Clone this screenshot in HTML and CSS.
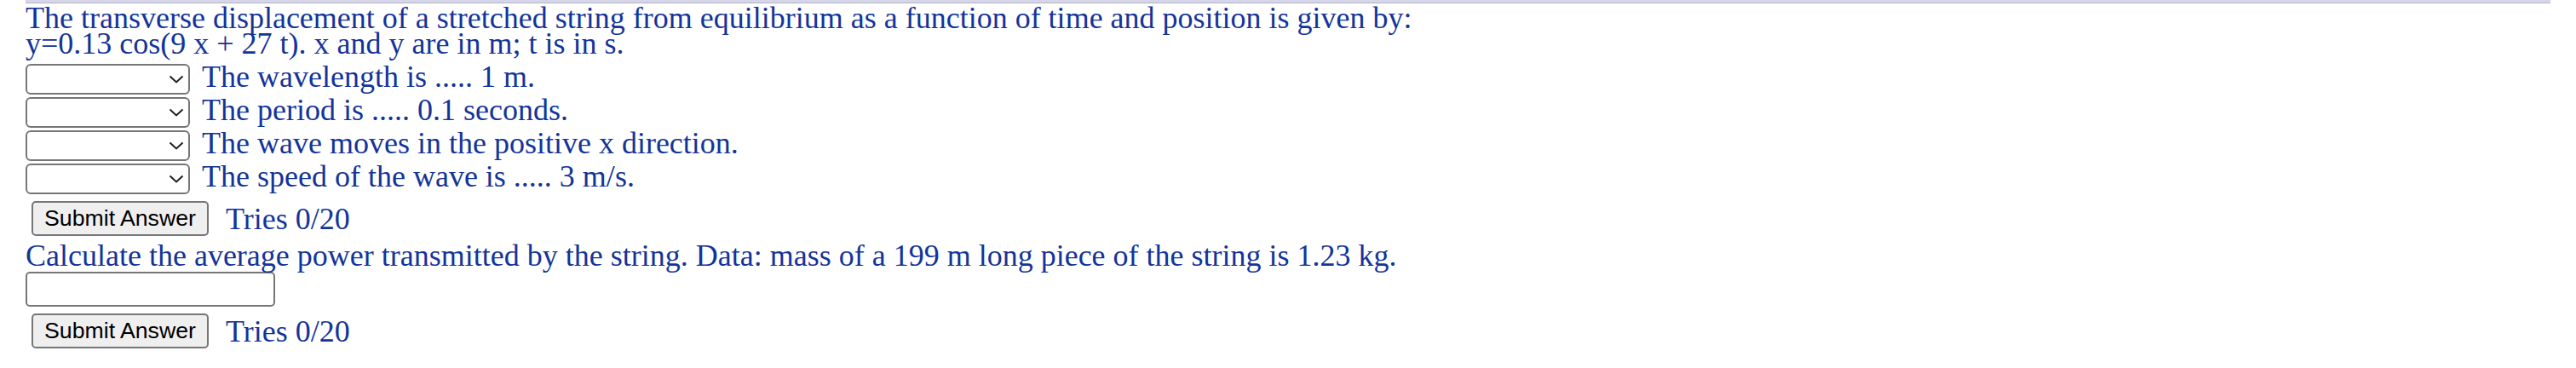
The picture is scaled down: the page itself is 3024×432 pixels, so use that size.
FILE: index.html
```html
<!DOCTYPE html>
<html>
<head>
<meta charset="utf-8">
<link rel="stylesheet" href="styles.css">
</head>
<body>
<div class="page">
  <div class="rule"></div>
  <p class="txt first">The transverse displacement of a stretched string from equilibrium as a function of time and position is given by:<br>y=0.13 cos(9 x + 27 t). x and y are in m; t is in s.</p>
  <div class="options">
    <div class="opt">
      <span class="sel"><select><option></option></select><svg class="chev" width="18" height="10" viewBox="0 0 18 10"><path d="M1.5 1.5 L9 8.5 L16.5 1.5" fill="none" stroke="#1e1e1e" stroke-width="2"/></svg></span>
      <span class="txt">The wavelength is ..... 1 m.</span>
    </div>
    <div class="opt">
      <span class="sel"><select><option></option></select><svg class="chev" width="18" height="10" viewBox="0 0 18 10"><path d="M1.5 1.5 L9 8.5 L16.5 1.5" fill="none" stroke="#1e1e1e" stroke-width="2"/></svg></span>
      <span class="txt">The period is ..... 0.1 seconds.</span>
    </div>
    <div class="opt">
      <span class="sel"><select><option></option></select><svg class="chev" width="18" height="10" viewBox="0 0 18 10"><path d="M1.5 1.5 L9 8.5 L16.5 1.5" fill="none" stroke="#1e1e1e" stroke-width="2"/></svg></span>
      <span class="txt">The wave moves in the positive x direction.</span>
    </div>
    <div class="opt">
      <span class="sel"><select><option></option></select><svg class="chev" width="18" height="10" viewBox="0 0 18 10"><path d="M1.5 1.5 L9 8.5 L16.5 1.5" fill="none" stroke="#1e1e1e" stroke-width="2"/></svg></span>
      <span class="txt">The speed of the wave is ..... 3 m/s.</span>
    </div>
  </div>
  <div class="submit-row">
    <button class="btn">Submit Answer</button>
    <span class="txt">Tries 0/20</span>
  </div>
  <p class="txt calc">Calculate the average power transmitted by the string. Data: mass of a 199 m long piece of the string is 1.23 kg.</p>
  <input class="answer" type="text">
  <div class="submit-row last">
    <button class="btn">Submit Answer</button>
    <span class="txt">Tries 0/20</span>
  </div>
</div>
</body>
</html>
```
FILE: styles.css
```css
html, body {
  margin: 0;
  padding: 0;
  background: #ffffff;
}
.page {
  padding: 0 30px;
}
.rule {
  height: 0;
  border-top: 3px solid #d6d6ea;
  border-bottom: 1px solid #b4b4c0;
}
.txt {
  font-family: "Liberation Serif", "Times New Roman", serif;
  font-size: 36px;
  line-height: 30px;
  color: #13349a;
}
p.txt {
  margin: 0;
}
.first {
  margin-top: 2px !important;
}
.options {
  margin-top: 9px;
  display: flex;
  flex-direction: column;
  gap: 3px;
}
.opt {
  display: flex;
  align-items: flex-start;
  gap: 14px;
}
.sel {
  position: relative;
  display: block;
  width: 193px;
  height: 36px;
  flex: none;
}
.sel select {
  -webkit-appearance: none;
  appearance: none;
  box-sizing: border-box;
  width: 193px;
  height: 36px;
  margin: 0;
  border: 2px solid #767676;
  border-radius: 6px;
  background: #ffffff;
  display: block;
}
.chev {
  position: absolute;
  left: 168px;
  top: 13px;
}
.submit-row {
  margin-top: 8px;
  display: flex;
  align-items: center;
  gap: 20px;
  padding-left: 7px;
}
.btn {
  box-sizing: border-box;
  width: 208px;
  height: 41px;
  margin: 0;
  padding: 0;
  font-family: "Liberation Sans", Arial, sans-serif;
  font-size: 26.67px;
  color: #000000;
  background: #efefef;
  border: 2px solid #767676;
  border-radius: 5px;
}
.calc {
  margin-top: 8px !important;
}
.answer {
  display: block;
  box-sizing: border-box;
  width: 293px;
  height: 41px;
  margin: 4px 0 0 0;
  border: 2px solid #767676;
  border-radius: 5px;
  background: #ffffff;
}
```
